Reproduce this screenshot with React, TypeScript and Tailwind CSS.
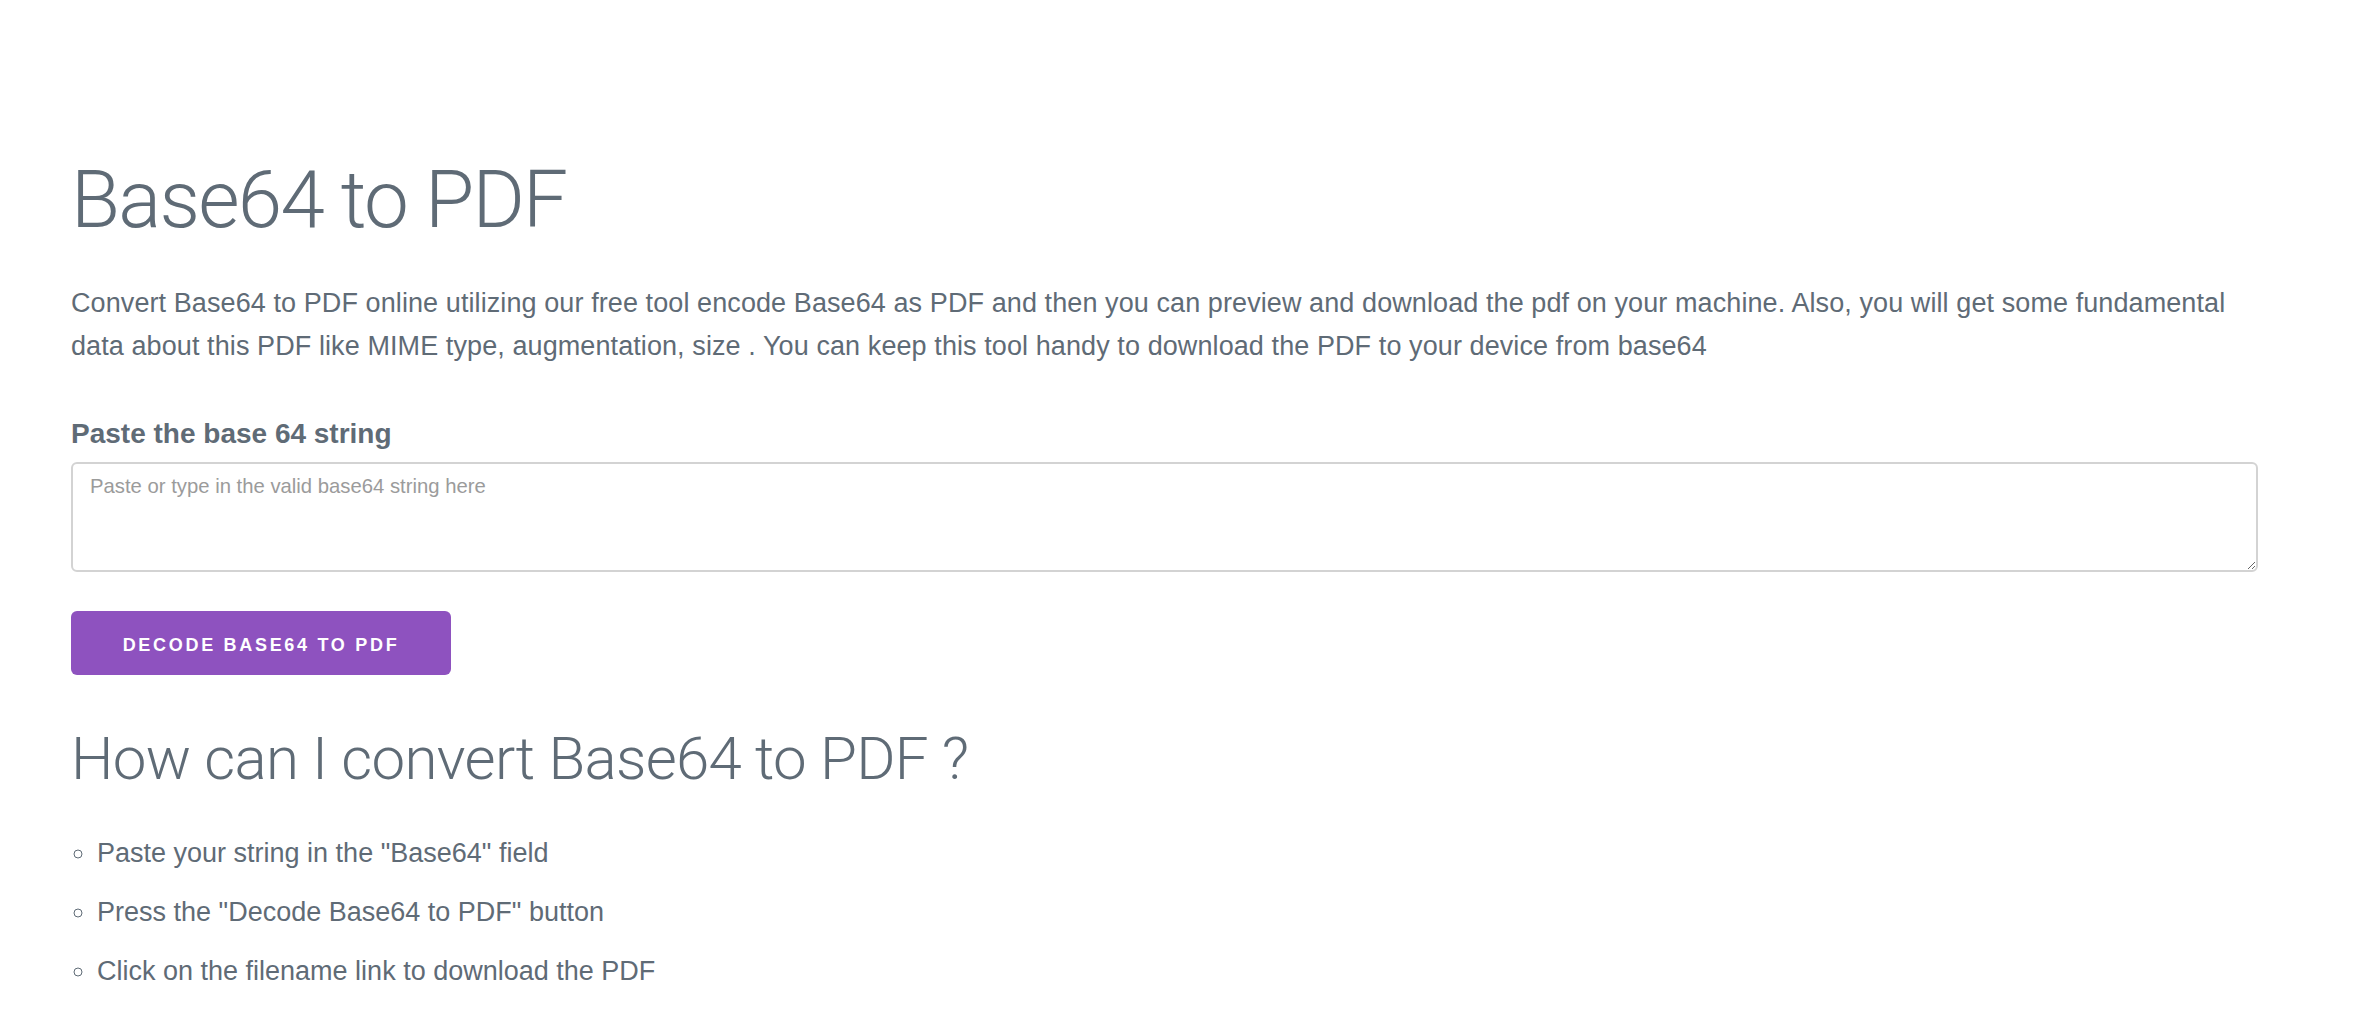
const steps = [
  'Paste your string in the "Base64" field',
  'Press the "Decode Base64 to PDF" button',
  "Click on the filename link to download the PDF",
];

const App = () => {
  return (
    <div className="min-h-screen bg-white text-[#5f6b76] font-['Liberation_Sans',Arial,sans-serif]">
      <main className="w-[2187px] ml-[71px] pt-[152px] pb-10">
        {/* Title */}
        <h1 className="font-['Roboto',sans-serif] font-light text-[80px] leading-[96px] tracking-[-1.75px]">
          Base64 to PDF
        </h1>
        <p className="mt-[34px] text-[27px] leading-[43px] tracking-[0.09px]">
          Convert Base64 to PDF online utilizing our free tool encode Base64 as PDF and then you can preview and
          download the pdf on your machine. Also, you will get some fundamental data about this PDF like MIME type,
          augmentation, size . You can keep this tool handy to download the PDF to your device from base64
        </p>

        {/* Form */}
        <label className="block mt-[50px] text-[28px] leading-[32px] font-bold">Paste the base 64 string</label>
        <textarea
          className="block mt-[12px] w-full h-[110px] border-2 border-[#d3d3d3] rounded-[6px] px-[17px] py-[7px] text-[20.3px] leading-[30px] placeholder:text-[#9b9b9b] outline-none"
          placeholder="Paste or type in the valid base64 string here"
        />
        <button className="mt-[39px] w-[380px] h-[64px] pt-[4px] rounded-[6px] bg-[#8e52bf] text-white text-[18px] font-bold uppercase tracking-[2.7px]">
          Decode Base64 to PDF
        </button>

        {/* How to */}
        <h2 className="mt-[48px] font-['Roboto',sans-serif] font-light text-[60px] leading-[72px] tracking-[-0.7px]">
          How can I convert Base64 to PDF ?
        </h2>
        <ul className="mt-[29px] list-[circle] pl-[26px] text-[27px] leading-[59px]">
          {steps.map((s) => (
            <li key={s}>{s}</li>
          ))}
        </ul>
      </main>
    </div>
  );
};

export default App;
